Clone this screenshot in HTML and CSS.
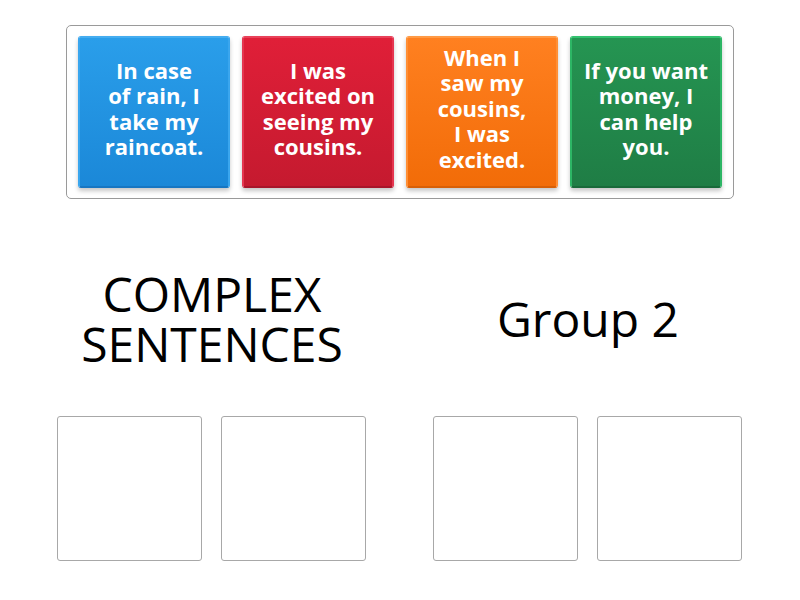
FILE: index.html
```html
<!DOCTYPE html>
<html>
<head>
<meta charset="utf-8">
<link rel="stylesheet" href="styles.css">
</head>
<body>
<div class="tray">
  <div class="card blue">In case<br>of rain, I<br>take my<br>raincoat.</div>
  <div class="card red">I was<br>excited on<br>seeing my<br>cousins.</div>
  <div class="card orange">When I<br>saw my<br>cousins,<br>I was<br>excited.</div>
  <div class="card green">If you want<br>money, I<br>can help<br>you.</div>
</div>
<div class="groups">
  <div class="group">
    <div class="title">COMPLEX SENTENCES</div>
    <div class="slots"><div class="slot"></div><div class="slot"></div></div>
  </div>
  <div class="group">
    <div class="title">Group 2</div>
    <div class="slots"><div class="slot"></div><div class="slot"></div></div>
  </div>
</div>
</body>
</html>
```
FILE: styles.css
```css
html, body { margin: 0; padding: 0; background: #fff; }
body { font-family: "Open Sans", "DejaVu Sans", sans-serif; width: 800px; height: 600px; overflow: hidden; }
.tray {
  margin: 25px 0 0 66px;
  width: 644px;
  padding: 10px 11px;
  border: 1px solid #9a9a9a;
  border-radius: 5px;
  display: flex;
  gap: 12px;
}
.card {
  box-sizing: border-box;
  width: 152px;
  height: 152px;
  border-radius: 3px;
  border: 2px solid;
  color: #fff;
  font-weight: 700;
  font-size: 22px;
  line-height: 25.5px;
  text-align: center;
  display: flex;
  align-items: center;
  justify-content: center;
  padding: 0 4px 7px;
  white-space: nowrap;
  box-shadow: 0 3px 4px rgba(0,0,0,0.22);
}
.blue { background: linear-gradient(#2a9eea, #1b88d8); border-color: #45adf0 #3aa6ee #1776c2 #3aa6ee; }
.red { background: linear-gradient(#e01f38, #c51a2f); border-color: #e9425a #e53650 #a8152a #e53650; }
.orange { background: linear-gradient(#ff8020, #f26c08); border-color: #ff9a45 #ff8f35 #d85f06 #ff8f35; }
.green { background: linear-gradient(#259552, #1f7d45); border-color: #33c26f #2db665 #196a3a #2db665; }
.groups {
  display: flex;
  gap: 67px;
  margin: 70px 0 0 57px;
}
.group { width: 309px; }
.title {
  height: 100px;
  display: flex;
  align-items: center;
  justify-content: center;
  text-align: center;
  font-size: 48px;
  line-height: 50px;
  color: #000;
  padding-left: 1px;
}
.slots { display: flex; gap: 19px; margin-top: 47px; }
.slot {
  box-sizing: border-box;
  width: 145px;
  height: 145px;
  border: 1px solid #a8a8a8;
  border-radius: 3px;
}
```
